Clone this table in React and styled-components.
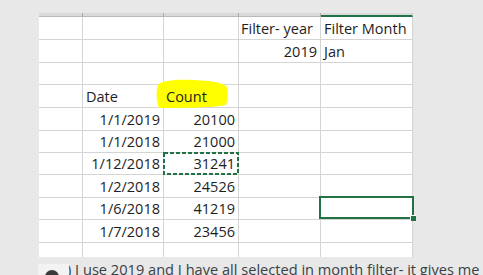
import styled, { createGlobalStyle } from "styled-components"

const GlobalStyle = createGlobalStyle`
  html, body {
    margin: 0;
    height: 100%;
    overflow: hidden;
    background: #e8e8e8;
  }
`

const GRID = "#d4d4d4"
const GREEN = "#217346"

const Page = styled.div`
  padding: 13px 0 0 39px;
  font-family: "Open Sans", "Liberation Sans", sans-serif;
`

const Sheet = styled.div`
  width: 374px;
  background: #fff;
`

const Row = styled.div`
  display: grid;
  grid-template-columns: 44px 81px 75px 82px 92px;
  height: ${p => p.$h}px;
`

const HeadCell = styled.div`
  box-sizing: border-box;
  height: 4px;
  background: #dadada;
  border-right: 1px solid #a9a9a9;
  border-bottom: ${p => (p.$active ? `2px solid ${GREEN}` : "1px solid #b8b8b8")};
  &:last-child {
    border-right-color: #c8c8c8;
  }
`

const Cell = styled.div`
  position: relative;
  box-sizing: border-box;
  display: flex;
  align-items: flex-end;
  justify-content: ${p => (p.$right ? "flex-end" : "flex-start")};
  padding: 0 3px 0 ${p => p.$pl ?? 3}px;
  border-right: 1px solid ${GRID};
  border-bottom: ${p => (p.$last ? "none" : `1px solid ${GRID}`)};
  font-size: 14.5px;
  line-height: 20px;
  color: #1e1e1e;
  white-space: nowrap;
`

const Label = styled.span`
  position: relative;
  z-index: 1;
`

const Highlight = styled.svg`
  position: absolute;
  left: -14px;
  top: -9px;
  z-index: 0;
`

const Marquee = styled.svg`
  position: absolute;
  left: -1px;
  top: -1px;
  z-index: 2;
`

const Selection = styled.div`
  position: absolute;
  left: -2px;
  top: -2px;
  width: 95px;
  height: 23px;
  box-sizing: border-box;
  border: 2px solid ${GREEN};
  z-index: 2;
`

const FillHandle = styled.div`
  position: absolute;
  right: -4px;
  bottom: -4px;
  width: 5px;
  height: 5px;
  background: ${GREEN};
  border-left: 1px solid #fff;
  border-top: 1px solid #fff;
`

const Comment = styled.div`
  display: flex;
  align-items: flex-start;
  margin: 1px 0 0 -1px;
`

const Avatar = styled.div`
  position: relative;
  z-index: 1;
  flex: none;
  width: 31px;
  height: 20px;
  margin-top: 6px;
  background: #f3f3f3;
`

const AvatarDot = styled.div`
  width: 14px;
  height: 14px;
  margin: 6px 0 0 7px;
  border-radius: 50%;
  background: #3a3a3a;
`

const CommentText = styled.div`
  margin: 1px 0 0 -2px;
  font-family: "Open Sans", "Liberation Sans", sans-serif;
  font-size: 14.6px;
  line-height: 20px;
  color: #3b4045;
  white-space: nowrap;
`

const heights = [23, 23, 22, 23, 23, 22, 22, 23, 22, 23, 14]

const data = [
  ["1/1/2019", "20100"],
  ["1/1/2018", "21000"],
  ["1/12/2018", "31241"],
  ["1/2/2018", "24526"],
  ["1/6/2018", "41219"],
  ["1/7/2018", "23456"],
]

function Blank({ last }) {
  return <Cell $last={last} />
}

export default function App() {
  const rows = []

  rows.push(
    <Row $h={heights[0]} key="r0">
      <Blank /><Blank /><Blank />
      <Cell $pl={2}><Label>Filter- year</Label></Cell>
      <Cell><Label>Filter Month</Label></Cell>
    </Row>
  )
  rows.push(
    <Row $h={heights[1]} key="r1">
      <Blank /><Blank /><Blank />
      <Cell $right><Label>2019</Label></Cell>
      <Cell><Label>Jan</Label></Cell>
    </Row>
  )
  rows.push(
    <Row $h={heights[2]} key="r2">
      <Blank /><Blank /><Blank /><Blank /><Blank />
    </Row>
  )
  rows.push(
    <Row $h={heights[3]} key="r3">
      <Blank />
      <Cell><Label>Date</Label></Cell>
      <Cell $pl={2}>
        <Highlight width="82" height="36" viewBox="0 0 82 36">
          <path
            fill="#ffff00"
            d="M8 9 C10 4 30 3 45 4 C60 5 72 6 77 11 C78 17 78 24 76 29 C60 32 30 32 9 32 C6 24 6 15 8 9 Z"
          />
        </Highlight>
        <Label>Count</Label>
      </Cell>
      <Blank /><Blank />
    </Row>
  )

  data.forEach(([date, count], i) => {
    rows.push(
      <Row $h={heights[4 + i]} key={date}>
        <Blank />
        <Cell $right><Label>{date}</Label></Cell>
        <Cell $right>
          {i === 2 && (
            <Marquee width="76" height="23" viewBox="0 0 76 23">
              <rect
                x="1" y="1" width="74" height="21"
                fill="none" stroke={GREEN} strokeWidth="2"
                strokeDasharray="4 2"
              />
            </Marquee>
          )}
          <Label>{count}</Label>
        </Cell>
        <Blank />
        <Cell>
          {i === 4 && (
            <Selection>
              <FillHandle />
            </Selection>
          )}
        </Cell>
      </Row>
    )
  })

  rows.push(
    <Row $h={heights[10]} key="r10">
      <Blank last /><Blank last /><Blank last /><Blank last /><Blank last />
    </Row>
  )

  return (
    <>
      <GlobalStyle />
      <Page>
        <Sheet>
          <Row $h={4}>
            <HeadCell /><HeadCell /><HeadCell /><HeadCell /><HeadCell $active />
          </Row>
          {rows}
        </Sheet>
        <Comment>
          <Avatar><AvatarDot /></Avatar>
          <CommentText>) I use 2019 and I have all selected in month filter- it gives me</CommentText>
        </Comment>
      </Page>
    </>
  )
}
